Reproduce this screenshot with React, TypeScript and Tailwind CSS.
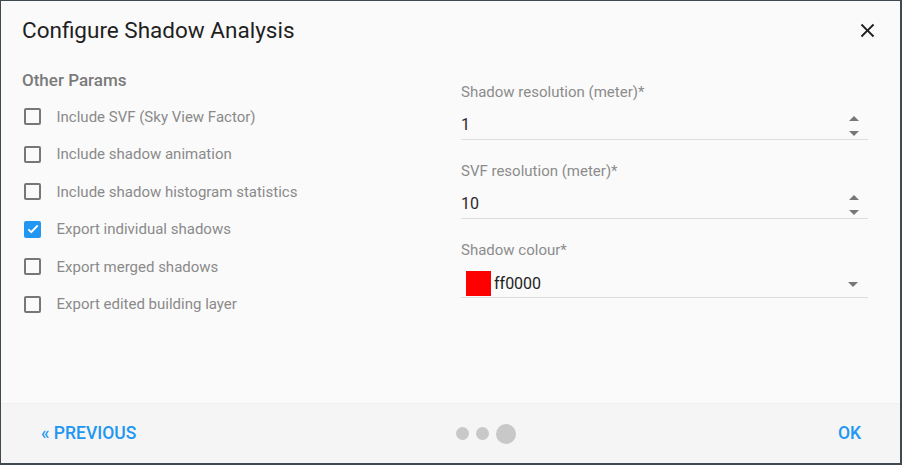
import React from "react";

// ── Small pieces ─────────────────────────────────────────────────────────────

function Checkbox({ label, checked }: { label: string; checked?: boolean }) {
  return (
    <div className="flex h-[37.5px] items-center">
      {checked ? (
        <span className="flex h-[17px] w-[17px] items-center justify-center rounded-[2px] bg-[#2196f3]">
          <svg width="14" height="14" viewBox="0 0 24 24">
            <path
              d="M4 12.5l5 5 11-11.5"
              fill="none"
              stroke="#ffffff"
              strokeWidth="3.2"
            />
          </svg>
        </span>
      ) : (
        <span className="h-[17px] w-[17px] rounded-[2px] border-2 border-[#777777]" />
      )}
      <span className="ml-[15.5px] text-[15px] leading-[20px] text-[#8a8a8a]">
        {label}
      </span>
    </div>
  );
}

function Triangle({ up }: { up?: boolean }) {
  return (
    <svg width="10" height="5" viewBox="0 0 10 5" className="block">
      <path d={up ? "M0 5L5 0L10 5Z" : "M0 0L5 5L10 0Z"} fill="#777777" />
    </svg>
  );
}

function NumberField({ label, value }: { label: string; value: string }) {
  return (
    <div className="flex flex-col">
      <span className="text-[15px] leading-[20px] text-[#8c8c8c]">{label}</span>
      <div className="flex h-[38.5px] items-end border-b border-[#dddddd]">
        <span className="flex-1 pb-[2px] text-[16px] leading-[24px] text-[#2a2a2a]">
          {value}
        </span>
        <div className="mr-[9px] mb-[3.5px] flex flex-col gap-[10px]">
          <Triangle up />
          <Triangle />
        </div>
      </div>
    </div>
  );
}

// ── Main dialog ──────────────────────────────────────────────────────────────

export default function App() {
  const options = [
    { label: "Include SVF (Sky View Factor)" },
    { label: "Include shadow animation" },
    { label: "Include shadow histogram statistics" },
    { label: "Export individual shadows", checked: true },
    { label: "Export merged shadows" },
    { label: "Export edited building layer" },
  ];

  return (
    <div
      className="flex h-[465px] w-[902px] bg-[#3f4a4e] pt-[1px] pl-[1px] pr-[2px] pb-[2px]"
      style={{ fontFamily: "Roboto, 'Noto Sans', sans-serif" }}
    >
      <div className="flex flex-1 flex-col bg-[#fafafa]">
        {/* Header */}
        <div className="flex items-center justify-between pt-[14px] pl-[21px] pr-[21px]">
          <h1 className="text-[22.5px] leading-[30px] font-normal text-[#1f1f1f]">
            Configure Shadow Analysis
          </h1>
          <svg width="23" height="23" viewBox="0 0 24 24">
            <path
              d="M19 6.41L17.59 5 12 10.59 6.41 5 5 6.41 10.59 12 5 17.59 6.41 19 12 13.41 17.59 19 19 17.59 13.41 12z"
              fill="#1f1f1f"
            />
          </svg>
        </div>

        {/* Body */}
        <div className="flex flex-1 pl-[21px]">
          <div className="flex w-[439px] flex-col pt-[23px]">
            <h2 className="text-[17px] leading-[24px] font-medium text-[#7a7a7a]">
              Other Params
            </h2>
            <div className="mt-[6px] flex flex-col pl-[2px]">
              {options.map((o) => (
                <Checkbox key={o.label} label={o.label} checked={o.checked} />
              ))}
            </div>
          </div>

          <div className="flex w-[407px] flex-col gap-[20.5px] pt-[36.5px]">
            <NumberField label="Shadow resolution (meter)*" value="1" />
            <NumberField label="SVF resolution (meter)*" value="10" />
            <div className="flex flex-col">
              <span className="text-[15px] leading-[20px] text-[#8c8c8c]">
                Shadow colour*
              </span>
              <div className="flex h-[38px] items-end border-b border-[#dddddd] pb-[1px]">
                <span className="ml-[5px] h-[25px] w-[25px] bg-[#ff0000]" />
                <span className="ml-[3px] flex-1 text-[16px] leading-[24px] text-[#1f1f1f]">
                  ff0000
                </span>
                <div className="mr-[10px] mb-[9px]">
                  <Triangle />
                </div>
              </div>
            </div>
          </div>
        </div>

        {/* Footer */}
        <div className="flex h-[60px] items-center border-t border-[#efefef] bg-[#f5f5f5] pl-[40px] pr-[39px]">
          <span className="text-[17.5px] font-medium text-[#2196f3]">« PREVIOUS</span>
          <div className="ml-[320px] flex items-center gap-[7px]">
            <span className="h-[13px] w-[13px] rounded-full bg-[#c8c8c8]" />
            <span className="h-[13px] w-[13px] rounded-full bg-[#c8c8c8]" />
            <span className="h-[20px] w-[20px] rounded-full bg-[#c8c8c8]" />
          </div>
          <span className="ml-auto text-[17.5px] font-medium text-[#2196f3]">OK</span>
        </div>
      </div>
    </div>
  );
}
